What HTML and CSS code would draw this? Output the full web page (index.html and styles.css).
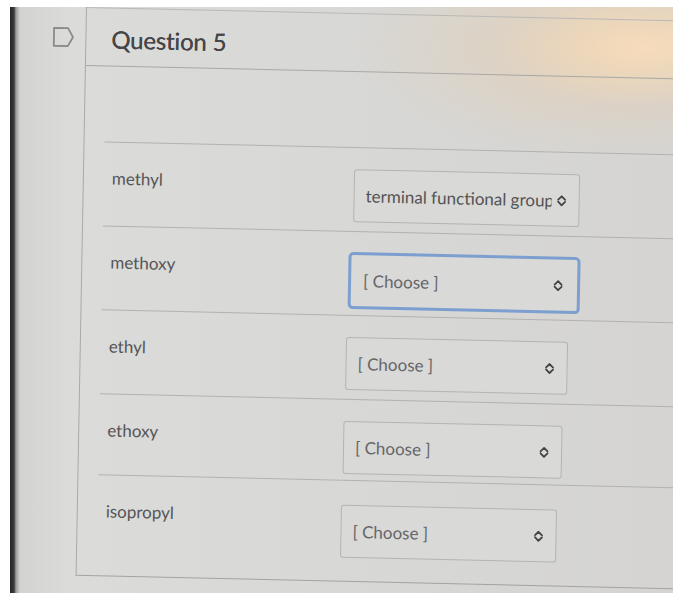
FILE: index.html
```html
<!DOCTYPE html>
<html lang="en">
<head>
<meta charset="utf-8">
<title>Question 5</title>
<link rel="stylesheet" href="styles.css">
</head>
<body>
<div class="photo">
  <div class="screen">
    <div class="rail">
      <svg class="flag" width="22" height="21" viewBox="0 0 22 21" aria-hidden="true">
        <path d="M1.5 1.5 H15.5 L20.5 10.5 L15.5 19.5 H1.5 Z" fill="none" stroke="#8a8a8c" stroke-width="1.8" stroke-linejoin="round"/>
      </svg>
    </div>
    <div class="card">
      <div class="card-header">
        <h2 class="title">Question 5</h2>
      </div>
      <div class="card-body">
        <div class="row">
          <div class="label">methyl</div>
          <div class="select">
            <span class="value value-set">terminal functional group</span>
            <svg class="arrows" width="10" height="12" viewBox="0 0 10 12" aria-hidden="true"><path d="M1.5 5 L5 1.5 L8.5 5 M1.5 7 L5 10.5 L8.5 7" fill="none" stroke="#444" stroke-width="1.8" stroke-linejoin="round" stroke-linecap="round"/></svg>
          </div>
        </div>
        <div class="row">
          <div class="label">methoxy</div>
          <div class="select select-focus">
            <span class="value">[ Choose ]</span>
            <svg class="arrows" width="10" height="12" viewBox="0 0 10 12" aria-hidden="true"><path d="M1.5 5 L5 1.5 L8.5 5 M1.5 7 L5 10.5 L8.5 7" fill="none" stroke="#444" stroke-width="1.8" stroke-linejoin="round" stroke-linecap="round"/></svg>
          </div>
        </div>
        <div class="row">
          <div class="label">ethyl</div>
          <div class="select select-far1">
            <span class="value">[ Choose ]</span>
            <svg class="arrows" width="10" height="12" viewBox="0 0 10 12" aria-hidden="true"><path d="M1.5 5 L5 1.5 L8.5 5 M1.5 7 L5 10.5 L8.5 7" fill="none" stroke="#444" stroke-width="1.8" stroke-linejoin="round" stroke-linecap="round"/></svg>
          </div>
        </div>
        <div class="row row-short">
          <div class="label">ethoxy</div>
          <div class="select select-far2">
            <span class="value">[ Choose ]</span>
            <svg class="arrows" width="10" height="12" viewBox="0 0 10 12" aria-hidden="true"><path d="M1.5 5 L5 1.5 L8.5 5 M1.5 7 L5 10.5 L8.5 7" fill="none" stroke="#444" stroke-width="1.8" stroke-linejoin="round" stroke-linecap="round"/></svg>
          </div>
        </div>
        <div class="row row-last">
          <div class="label">isopropyl</div>
          <div class="select select-far3">
            <span class="value">[ Choose ]</span>
            <svg class="arrows" width="10" height="12" viewBox="0 0 10 12" aria-hidden="true"><path d="M1.5 5 L5 1.5 L8.5 5 M1.5 7 L5 10.5 L8.5 7" fill="none" stroke="#444" stroke-width="1.8" stroke-linejoin="round" stroke-linecap="round"/></svg>
          </div>
        </div>
      </div>
    </div>
  </div>
</div>
</body>
</html>
```
FILE: styles.css
```css
html, body {
  margin: 0;
  padding: 0;
  background: #ffffff;
}

body {
  width: 700px;
  height: 594px;
  overflow: hidden;
  font-family: Lato, "Open Sans", "Liberation Sans", sans-serif;
}

.photo {
  margin: 7px 0 0 10px;
  width: 663px;
  height: 586px;
  overflow: hidden;
  background:
    radial-gradient(ellipse 150px 60px at 635px 40px, rgba(250, 222, 186, 0.85), rgba(246, 206, 160, 0) 100%),
    radial-gradient(ellipse 260px 110px at 600px 40px, rgba(240, 200, 150, 0.45), rgba(240, 200, 150, 0) 100%),
    linear-gradient(to right, #262626 0, #3a3a3a 4px, #9c9c9a 6px, #d3d3d1 10px, #dbdbd9 60px, #d7d7d5 400px, #d5d4d2 663px);
}

.screen {
  display: flex;
  width: 740px;
  height: 600px;
  transform-origin: 76px 0;
  transform: skewY(1.3deg) skewX(-1.05deg);
}

.rail {
  flex: none;
  width: 76px;
  padding-top: 20px;
  box-sizing: border-box;
}

.flag {
  display: block;
  margin-left: 43px;
}

.card {
  flex: 1;
  height: 569px;
  box-sizing: border-box;
  border-left: 1px solid #a9a9a7;
  border-top: 1px solid #b9b9b7;
  border-bottom: 1px solid #a3a3a1;
}

.card-header {
  height: 58px;
  box-sizing: border-box;
  border-bottom: 1px solid #a8a8a6;
  display: flex;
  align-items: center;
  padding: 4px 0 0 25px;
}

.title {
  margin: 0;
  font-size: 24px;
  font-weight: 400;
  color: #46464a;
  letter-spacing: -0.2px;
  text-shadow: 0 0 0.6px #46464a;
}

.card-body {
  padding: 75px 0 0 20px;
}

.row {
  height: 84px;
  box-sizing: border-box;
  border-top: 1px solid #b2b2b0;
  display: flex;
  align-items: flex-start;
  padding: 21px 0 0 8px;
}

.row-short {
  height: 81px;
}

.row-last {
  padding-top: 24px;
}

.label {
  flex: none;
  width: 242px;
  padding-top: 4px;
  font-size: 17px;
  line-height: 22px;
  color: #555557;
}

.row-last .label {
  padding-top: 1px;
}

.select {
  flex: none;
  width: 226px;
  height: 53px;
  box-sizing: border-box;
  border: 1px solid #b4b4b2;
  border-radius: 3px;
  background: #d9d9d7;
  display: flex;
  align-items: center;
  gap: 5px;
  padding: 0 12px 0 11px;
}

.select-focus {
  width: 232px;
  height: 57px;
  margin: -1px 0 0 -4px;
  border: 3px solid #7d9fd0;
  border-radius: 5px;
  padding-left: 12px;
  padding-right: 14px;
}

.select-far1 {
  width: 222px;
  margin-left: -5px;
}

.select-far2 {
  width: 219px;
  margin-left: -6px;
}

.select-far3 {
  width: 216px;
  margin-left: -7px;
}

.value {
  flex: 1;
  min-width: 0;
  overflow: hidden;
  white-space: nowrap;
  font-size: 17px;
  color: #66666a;
}

.value-set {
  color: #535355;
}

.arrows {
  flex: none;
  display: block;
}
```
